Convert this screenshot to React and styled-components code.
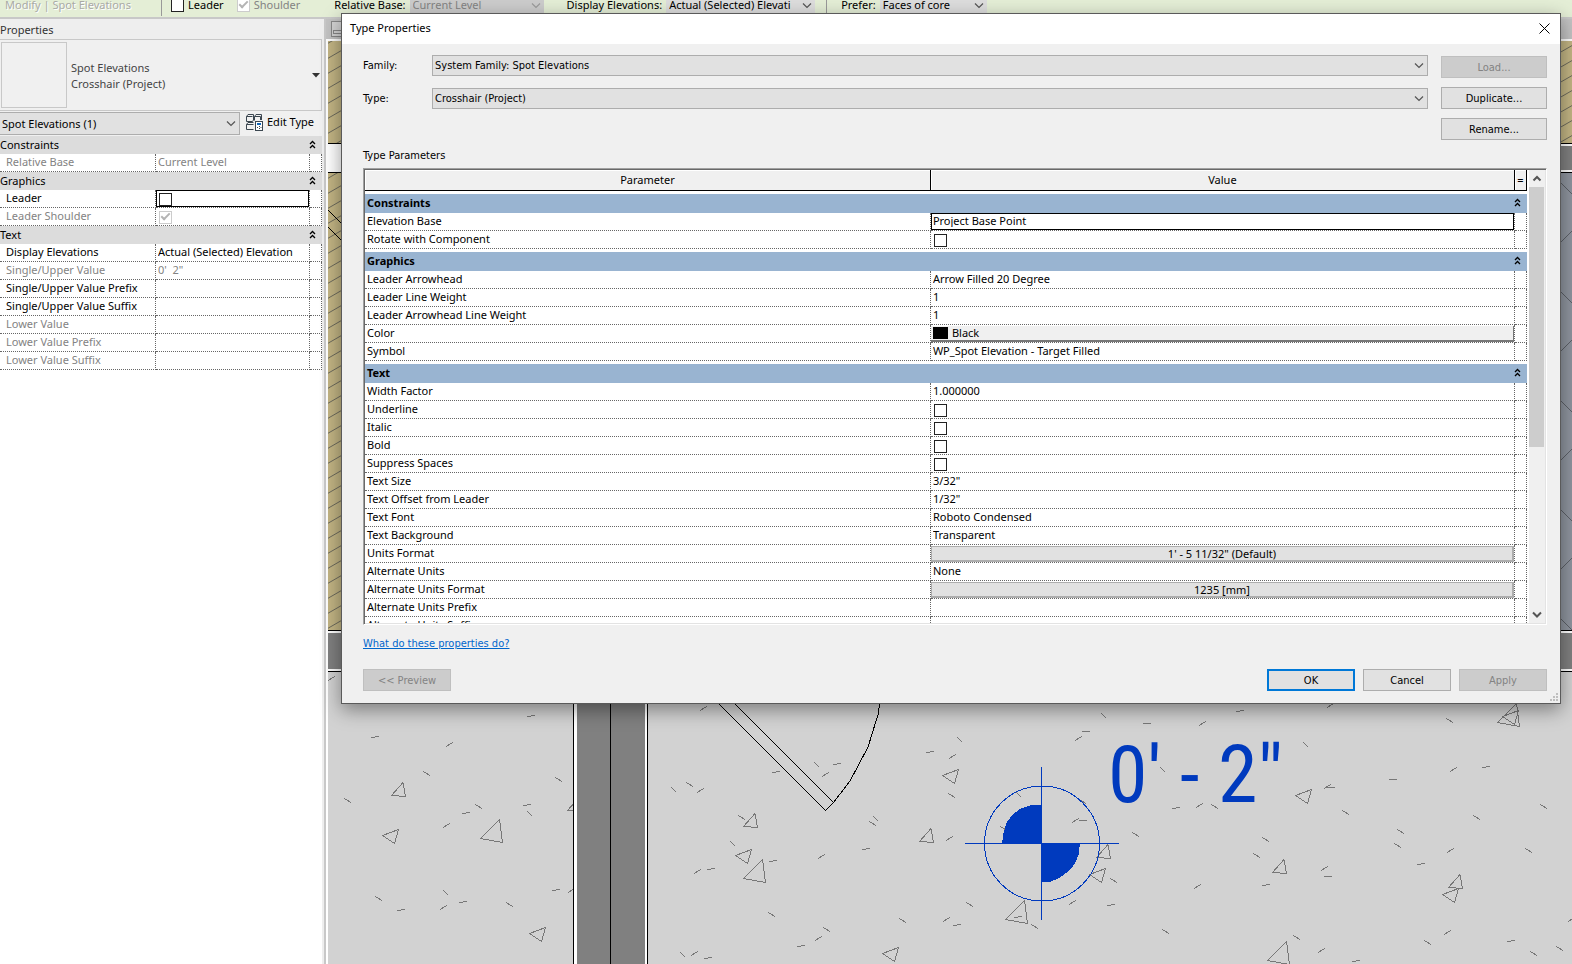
import React from 'react';
import styled, { createGlobalStyle, css } from 'styled-components';

const UI = "'Noto Sans', 'Open Sans', sans-serif";
const DIALOG = "'DejaVu Sans Condensed', 'Noto Sans', sans-serif";

const paletteGroups = [
  {
    name: 'Constraints',
    rows: [{ label: 'Relative Base', value: 'Current Level', disabled: true }],
  },
  {
    name: 'Graphics',
    rows: [
      { label: 'Leader', kind: 'check', active: true },
      { label: 'Leader Shoulder', kind: 'check', checked: true, disabled: true },
    ],
  },
  {
    name: 'Text',
    rows: [
      { label: 'Display Elevations', value: 'Actual (Selected) Elevation' },
      { label: 'Single/Upper Value', value: "0'  2\"", disabled: true },
      { label: 'Single/Upper Value Prefix', value: '' },
      { label: 'Single/Upper Value Suffix', value: '' },
      { label: 'Lower Value', value: '', disabled: true },
      { label: 'Lower Value Prefix', value: '', disabled: true },
      { label: 'Lower Value Suffix', value: '', disabled: true },
    ],
  },
];

const typeGroups = [
  {
    name: 'Constraints',
    rows: [
      { label: 'Elevation Base', kind: 'select', value: 'Project Base Point' },
      { label: 'Rotate with Component', kind: 'check' },
    ],
  },
  {
    name: 'Graphics',
    rows: [
      { label: 'Leader Arrowhead', value: 'Arrow Filled 20 Degree' },
      { label: 'Leader Line Weight', value: '1' },
      { label: 'Leader Arrowhead Line Weight', value: '1' },
      { label: 'Color', kind: 'color', value: 'Black' },
      { label: 'Symbol', value: 'WP_Spot Elevation - Target Filled' },
    ],
  },
  {
    name: 'Text',
    rows: [
      { label: 'Width Factor', value: '1.000000' },
      { label: 'Underline', kind: 'check' },
      { label: 'Italic', kind: 'check' },
      { label: 'Bold', kind: 'check' },
      { label: 'Suppress Spaces', kind: 'check' },
      { label: 'Text Size', value: '3/32"' },
      { label: 'Text Offset from Leader', value: '1/32"' },
      { label: 'Text Font', value: 'Roboto Condensed' },
      { label: 'Text Background', value: 'Transparent' },
      { label: 'Units Format', kind: 'button', value: '1\' - 5 11/32" (Default)' },
      { label: 'Alternate Units', value: 'None' },
      { label: 'Alternate Units Format', kind: 'button', value: '1235 [mm]' },
      { label: 'Alternate Units Prefix', value: '' },
      { label: 'Alternate Units Suffix', value: '' },
    ],
  },
];

// concrete hatch: one outline per mark, repeated at [x, y]
const marks = [
  {
    d: 'M0 1.5H3L5 .5H8',
    at: [
      [527, 715], [371, 736], [462, 812], [523, 804], [397, 909], [459, 901], [552, 889], [707, 868], [704, 957],
      [926, 751], [772, 771], [833, 763], [862, 848], [769, 860], [797, 945], [953, 924], [1107, 904], [1014, 916],
      [1236, 710], [1172, 807], [1482, 766], [1262, 884], [1417, 863], [1507, 940], [1352, 960],
    ],
  },
  {
    d: 'M0 .5H8',
    at: [[1143, 723], [1389, 779], [1324, 876], [1327, 787], [1082, 731], [1079, 820], [1418, 703]],
  },
  {
    d: 'M0 4.5L7 .5',
    at: [
      [446, 742], [443, 823], [440, 905], [697, 788], [694, 869], [691, 951], [700, 706], [568, 888], [949, 754],
      [1075, 736], [822, 772], [946, 836], [818, 854], [943, 917], [1072, 818], [1069, 900], [815, 936], [1199, 721],
      [1196, 803], [1194, 884], [1321, 866], [1450, 767], [1447, 848], [1444, 930], [1318, 948], [1324, 784],
      [1327, 703], [1568, 917], [328, 676],
    ],
  },
  {
    d: 'M0 .5L7 4.5',
    at: [
      [423, 771], [344, 798], [475, 804], [555, 777], [375, 896], [506, 902], [686, 782], [948, 793], [869, 821],
      [768, 912], [899, 918], [966, 902], [823, 927], [738, 815], [1132, 832], [1110, 878], [1031, 924], [1000, 826],
      [1079, 799], [1211, 804], [1262, 837], [1253, 853], [1342, 810], [1397, 829], [1394, 843], [1473, 815],
      [1540, 804], [1525, 848], [1162, 929], [1293, 935], [1424, 940], [1556, 946], [1530, 951], [1446, 718],
    ],
  },
  {
    d: 'M.5 .5L5.5 5.5',
    at: [
      [527, 811], [443, 890], [671, 787], [680, 952], [730, 841], [957, 737], [1101, 713], [814, 762], [873, 816],
      [1016, 792], [1303, 742], [1160, 767],
    ],
  },
  {
    d: 'M.5 13.5L12 .5L14.5 14.5Z',
    at: [[391, 782], [743, 813], [919, 828], [1096, 844], [1272, 859], [1448, 874], [567, 797]],
  },
  {
    d: 'M.5 6.5L16.5 .5L12.5 14.5Z',
    at: [[382, 829], [529, 927], [735, 849], [942, 769], [1089, 868], [882, 947], [1295, 789], [1442, 888], [1502, 710]],
  },
  {
    d: 'M.5 19.5L19.5 .5L22.5 23.5Z',
    at: [[480, 819], [743, 859], [1005, 900], [1267, 941], [1497, 703]],
  },
];

function ChevronsIcon() {
  return (
    <svg width="7" height="10" viewBox="0 0 7 10" fill="none" stroke="#000" strokeWidth="1.3" aria-hidden="true">
      <path d="M1 4L3.5 1.5L6 4M1 8L3.5 5.5L6 8" />
    </svg>
  );
}

function ChevronIcon({ color = '#555', up, bold }) {
  return (
    <svg width="10" height="7" viewBox="0 0 10 7" fill="none" stroke={color} strokeWidth={bold ? 2 : 1.2} aria-hidden="true">
      <path d={up ? 'M1.5 5.5L5 2L8.5 5.5' : 'M1 1.5L5 5.5L9 1.5'} />
    </svg>
  );
}

function EditTypeIcon() {
  return (
    <svg width="17" height="17" viewBox="0 0 17 17" fill="none" stroke="#3b4650" aria-hidden="true">
      <path d="M.5 2.5L2 .5H7.5V6L6.5 7.5H.5ZM8.5 2.5L10 .5H15.5V6M8.5 2.5V6.5M.5 2.5H6.5M8.5 2.5H14.5V6M7.5 15.5H.5V10.5L2 8.5H7.5M.5 10.5H7.5" />
      <rect x="9.5" y="7.5" width="7" height="9" fill="#fff" />
      <path d="M11 9.5H15M11 10.5H15" stroke="#1467b8" />
      <path d="M11 13.5H12M13 12.5H14M13 14.5H14M14.5 13.5H15.5" />
    </svg>
  );
}

function Select({ id, label, value, muted, tone }) {
  return (
    <SelectBox $muted={muted} $tone={tone}>
      <select id={id} aria-label={label} defaultValue={value} disabled={muted}>
        <option>{value}</option>
      </select>
      <ChevronIcon color={muted ? '#9b9b9b' : '#555'} />
    </SelectBox>
  );
}

function ValueCell({ row, id }) {
  switch (row.kind) {
    case 'check':
      return (
        <CheckHolder $active={row.active}>
          <Checkbox id={id} defaultChecked={row.checked} disabled={row.disabled} />
        </CheckHolder>
      );
    case 'select':
      return (
        <CellSelect id={id} defaultValue={row.value}>
          <option>{row.value}</option>
        </CellSelect>
      );
    case 'button':
      return <CellButton id={id} type="button">{row.value}</CellButton>;
    case 'color':
      return (
        <ColorButton id={id} type="button">
          <Swatch />
          {row.value}
        </ColorButton>
      );
    default:
      return <CellInput id={id} type="text" defaultValue={row.value} disabled={row.disabled} />;
  }
}

function ParameterGroups({ groups, prefix, Heading }) {
  return groups.map((group) => (
    <tbody key={group.name}>
      <tr>
        <Heading colSpan={3} scope="rowgroup">
          <GroupBar>
            {group.name}
            <button type="button" aria-label={`Collapse ${group.name}`}><ChevronsIcon /></button>
          </GroupBar>
        </Heading>
      </tr>
      {group.rows.map((row) => {
        const id = `${prefix}-${row.label.replace(/\W+/g, '-').toLowerCase()}`;
        return (
          <tr key={row.label}>
            <Cell $disabled={row.disabled}><label htmlFor={id}>{row.label}</label></Cell>
            <Cell><ValueCell row={row} id={id} /></Cell>
            <Cell />
          </tr>
        );
      })}
    </tbody>
  ));
}

function OptionsStrip() {
  return (
    <OptionsBar>
      <ModeName>Modify | Spot Elevations</ModeName>
      <OptionLabel><Checkbox />Leader</OptionLabel>
      <OptionLabel $disabled><Checkbox defaultChecked disabled />Shoulder</OptionLabel>
      <OptionField $width="134px" $after="23px">
        <label htmlFor="opt-base">Relative Base:</label>
        <Select id="opt-base" value="Current Level" muted tone="#cccccc" />
      </OptionField>
      <OptionField $width="149px" $after="11px">
        <label htmlFor="opt-display">Display Elevations:</label>
        <Select id="opt-display" value="Actual (Selected) Elevati" tone="#dddddd" />
      </OptionField>
      <OptionDivider />
      <OptionField $width="107px" $after="0px">
        <label htmlFor="opt-prefer">Prefer:</label>
        <Select id="opt-prefer" value="Faces of core" tone="#dddddd" />
      </OptionField>
    </OptionsBar>
  );
}

function PropertiesPalette() {
  return (
    <Palette>
      <PaletteTitle>Properties</PaletteTitle>
      <TypeSelector type="button">
        <Thumbnail />
        <TypeName>
          Spot Elevations
          <br />
          Crosshair (Project)
        </TypeName>
        <svg width="8" height="5" viewBox="0 0 8 5" aria-hidden="true"><path d="M0 0H8L4 4.5Z" fill="#333" /></svg>
      </TypeSelector>
      <FilterRow>
        <Select label="Element filter" value="Spot Elevations (1)" tone="#e1e1e1" />
        <EditType type="button"><EditTypeIcon />Edit Type</EditType>
      </FilterRow>
      <PaletteTable>
        <colgroup><col width="156" /><col /><col width="12" /></colgroup>
        <ParameterGroups groups={paletteGroups} prefix="inst" Heading={PaletteHeading} />
      </PaletteTable>
    </Palette>
  );
}

function Drawing() {
  return (
    <Sheet viewBox="328 41 1244 923" preserveAspectRatio="xMinYMin slice" aria-label="Floor plan">
      <defs>
        <pattern id="wood" width="26" height="15" patternUnits="userSpaceOnUse">
          <rect width="26" height="15" fill="#c3b584" />
          <path d="M-26 22.5L26 -7.5M0 22.5L52 -7.5" stroke="#6c6a5c" fill="none" />
        </pattern>
        <pattern id="tile" x="1560" y="182" width="64" height="109" patternUnits="userSpaceOnUse">
          <rect width="64" height="109" fill="#8f959f" />
          <path d="M0 0L32 32M0 61L32 29" stroke="#5c6067" fill="none" />
        </pattern>
      </defs>
      <rect x="328" y="41" width="1244" height="923" fill="#d2d2d2" />
      <g shapeRendering="crispEdges">
        <rect x="328" y="41" width="1244" height="102" fill="url(#wood)" />
        <rect x="328" y="143" width="1244" height="30" fill="#000" />
        <rect x="328" y="144" width="1200" height="28" fill="#fff" />
        <rect x="1528" y="144" width="44" height="28" fill="#fff" />
        <rect x="1528" y="146" width="44" height="24" fill="#808080" />
        <rect x="328" y="173" width="600" height="457" fill="url(#wood)" />
        <rect x="928" y="173" width="644" height="457" fill="url(#tile)" />
        <rect x="328" y="630" width="1244" height="42" fill="#000" />
        <rect x="328" y="631" width="1244" height="40" fill="#fff" />
        <rect x="328" y="633" width="1244" height="36" fill="#808080" />
        <path d="M328 210L343 225M328 227L343 242" stroke="#000" fill="none" />
        <g fill="none" stroke="#777">
          {marks.map((mark) => mark.at.map(([x, y]) => (
            <path key={`${x}-${y}`} d={mark.d} transform={`translate(${x} ${y})`} />
          )))}
        </g>
        <rect x="573" y="672" width="75" height="292" fill="#000" />
        <rect x="574" y="672" width="73" height="292" fill="#fff" />
        <rect x="577" y="672" width="68" height="292" fill="#808080" />
        <rect x="610" y="672" width="1" height="292" fill="#000" />
        <path
          d="M718 703L825.5 810.5L833.5 802.5L734 703M833.5 802.5L850 781L868 747L878.5 713L879.5 703"
          stroke="#000"
          fill="none"
        />
        <g stroke="#003abe" fill="none">
          <circle cx="1042" cy="843.5" r="57.5" />
          <path d="M965 843.5H1119M1041.5 767V920" />
          <path
            d="M1041.5 843.5V805.5H1032L1021 809L1013 815L1007 823L1004 833L1002.5 843.5ZM1041.5 843.5H1079.5L1078 855L1074 864L1068 871L1060 877L1051 881L1041.5 882Z"
            fill="#003abe"
          />
        </g>
      </g>
      <SpotText x="1108" y="802">0&apos; - 2&quot;</SpotText>
    </Sheet>
  );
}

function TypeProperties() {
  return (
    <Dialog role="dialog" aria-labelledby="dialog-title">
      <TitleBar>
        <h1 id="dialog-title">Type Properties</h1>
        <button type="button" aria-label="Close">
          <svg width="11" height="11" viewBox="0 0 11 11" fill="none" stroke="#000" aria-hidden="true">
            <path d="M.5 .5L10.5 10.5M10.5 .5L.5 10.5" />
          </svg>
        </button>
      </TitleBar>
      <DialogBody>
        <TypeForm>
          <Fields>
            <label htmlFor="family">Family:</label>
            <Select id="family" value="System Family: Spot Elevations" tone="#e1e1e1" />
            <label htmlFor="type">Type:</label>
            <Select id="type" value="Crosshair (Project)" tone="#e1e1e1" />
          </Fields>
          <SideButtons>
            <PushButton type="button" disabled>Load...</PushButton>
            <PushButton type="button">Duplicate...</PushButton>
            <PushButton type="button">Rename...</PushButton>
          </SideButtons>
        </TypeForm>
        <Caption id="params-caption">Type Parameters</Caption>
        <Frame>
          <GridView>
            <TypeTable aria-labelledby="params-caption">
              <colgroup><col width="48.7%" /><col /><col width="12" /></colgroup>
              <thead>
                <tr>
                  <ColumnHead scope="col">Parameter</ColumnHead>
                  <ColumnHead scope="col">Value</ColumnHead>
                  <ColumnHead scope="col">=</ColumnHead>
                </tr>
              </thead>
              <ParameterGroups groups={typeGroups} prefix="type" Heading={TypeHeading} />
            </TypeTable>
          </GridView>
          <ScrollBar>
            <button type="button" aria-label="Scroll up"><ChevronIcon up bold /></button>
            <Track><Thumb /></Track>
            <button type="button" aria-label="Scroll down"><ChevronIcon bold /></button>
          </ScrollBar>
        </Frame>
        <HelpLink href="#help">What do these properties do?</HelpLink>
        <Footer>
          <PushButton type="button" disabled>&lt;&lt; Preview</PushButton>
          <Spacer />
          <PushButton type="button" $primary>OK</PushButton>
          <PushButton type="button">Cancel</PushButton>
          <PushButton type="button" disabled>Apply</PushButton>
        </Footer>
      </DialogBody>
      <Grip width="9" height="9" viewBox="0 0 9 9" aria-hidden="true">
        <path d="M6 0h2v2h-2zM3 3h2v2h-2zM6 3h2v2h-2zM0 6h2v2h-2zM3 6h2v2h-2zM6 6h2v2h-2z" fill="#bfbfbf" />
      </Grip>
    </Dialog>
  );
}

export default function App() {
  return (
    <Desktop>
      <GlobalStyle />
      <OptionsStrip />
      <Workspace>
        <PropertiesPalette />
        <Splitter />
        <View>
          <ViewTabs>
            <svg width="20" height="17" viewBox="0 0 20 17" fill="none" stroke="#888" aria-hidden="true">
              <rect x=".5" y=".5" width="22" height="15" fill="#d4d4d4" />
              <rect x="2.5" y="9.5" width="14" height="3" />
            </svg>
          </ViewTabs>
          <Drawing />
        </View>
      </Workspace>
      <TypeProperties />
    </Desktop>
  );
}

const GlobalStyle = createGlobalStyle`
  *, *::before, *::after {
    box-sizing: border-box;
  }

  body {
    margin: 0;
    overflow: hidden;
  }

  button, input, select {
    margin: 0;
    padding: 0;
    border: 0;
    border-radius: 0;
    background: transparent;
    color: inherit;
    font: inherit;
    appearance: none;
    outline: none;
  }
`;

const Desktop = styled.div`
  position: relative;
  display: flex;
  flex-direction: column;
  height: 100vh;
  overflow: hidden;
  background: #c8c8c8;
  color: #000;
  font: 11px/16px ${UI};
`;

const Checkbox = styled.input.attrs({ type: 'checkbox' })`
  display: block;
  flex: none;
  width: 13px;
  height: 13px;
  border: 1px solid #222;
  background: #fff;

  &:disabled {
    border-color: #ccc;
  }

  &:checked::after {
    content: '';
    display: block;
    width: 9px;
    height: 5px;
    margin: 1px;
    border: solid #b4b4b4;
    border-width: 0 0 2px 2px;
    transform: rotate(-45deg);
  }
`;

const SelectBox = styled.div`
  display: grid;
  align-items: center;
  min-width: 0;
  height: 21px;
  border: 1px solid #adadad;
  background: ${(p) => p.$tone};
  color: ${(p) => (p.$muted ? '#838383' : '#000')};

  > * {
    grid-area: 1 / 1;
  }

  select {
    width: 100%;
    height: 19px;
    padding: 0 20px 0 3px;
    opacity: 1;
  }

  svg {
    justify-self: end;
    margin-right: 3px;
    pointer-events: none;
  }
`;

const OptionsBar = styled.div`
  display: flex;
  flex: none;
  align-items: center;
  height: 17px;
  padding: 0 0 7px 5px;
  overflow: hidden;
  background: #e4eed6;
`;

const ModeName = styled.span`
  width: 157px;
  height: 22px;
  margin-right: 9px;
  border-right: 1px solid #999;
  color: #a9aaa6;
  line-height: 22px;
  text-shadow: 1px 1px #fff;
  white-space: nowrap;
`;

const OptionLabel = styled.label`
  display: flex;
  align-items: center;
  gap: 4px;
  margin-right: ${(p) => (p.$disabled ? 34 : 13)}px;
  color: ${(p) => (p.$disabled ? '#838383' : '#000')};
`;

const OptionField = styled.div`
  display: flex;
  align-items: center;
  gap: 4px;
  margin-right: ${(p) => p.$after};
  white-space: nowrap;

  ${SelectBox} {
    width: ${(p) => p.$width};
    border: 0;
  }
`;

const OptionDivider = styled.div`
  width: 1px;
  height: 22px;
  margin-right: 14px;
  background: #999;
`;

const Workspace = styled.div`
  display: flex;
  flex: 1;
  min-height: 0;
  margin-top: 2px;
`;

const Palette = styled.aside`
  flex: none;
  width: 322px;
  background: #fff;
`;

const Splitter = styled.div`
  flex: none;
  width: 4px;
  border-left: 2px solid #eee;
  background: #c8c8c8;
`;

const PaletteTitle = styled.div`
  height: 20px;
  background: #eee;
  color: #333;
  line-height: 21px;
`;

const TypeSelector = styled.button`
  display: flex;
  align-items: center;
  width: 100%;
  height: 72px;
  padding: 2px 1px;
  border: solid #c8c8c8;
  border-width: 1px 1px 1px 0;
  background: #f0f0f0;
  color: #444;
  text-align: left;
`;

const Thumbnail = styled.span`
  width: 66px;
  height: 66px;
  border: 1px solid #c8c8c8;
`;

const TypeName = styled.span`
  flex: 1;
  padding-top: 2px;
  margin-left: 4px;
`;

const FilterRow = styled.div`
  display: grid;
  grid-template-columns: 240px 1fr;
  align-items: center;
  height: 25px;
  background: #f0f0f0;

  ${SelectBox} {
    height: 23px;
    border-left: 0;
  }

  select {
    padding-left: 2px;
  }
`;

const EditType = styled.button`
  display: flex;
  align-items: center;
  gap: 4px;
  margin-left: 6px;
  padding-bottom: 3px;
`;

const tableBase = css`
  width: 100%;
  border-collapse: separate;
  border-spacing: 0;
  table-layout: fixed;
`;

const Cell = styled.td`
  height: 18px;
  padding: 0;
  border: 1px dotted #666;
  border-width: 0 1px 1px 0;
  overflow: hidden;
  color: ${(p) => (p.$disabled ? '#838383' : '#000')};
  line-height: 15px;
  white-space: nowrap;
  vertical-align: top;
`;

const PaletteTable = styled.table`
  ${tableBase}

  label {
    padding-left: 6px;
  }
`;

const TypeTable = styled.table`
  ${tableBase}

  label {
    padding-left: 2px;
  }
`;

const GroupBar = styled.div`
  display: flex;
  align-items: center;
  justify-content: space-between;
  padding-right: 6px;

  button {
    display: flex;
  }
`;

const PaletteHeading = styled.th`
  height: 18px;
  padding: 0;
  background: #dcdcdc;
  font-weight: 400;
  line-height: 18px;
`;

const TypeHeading = styled.th`
  height: 22px;
  padding: 0 0 0 2px;
  border-top: 3px solid #fff;
  background: #99b4d1;
  font-weight: 700;
  line-height: 17px;
  vertical-align: top;
`;

const ColumnHead = styled.th`
  height: 21px;
  padding: 0;
  border: solid #000;
  border-width: 0 1px 1px 0;
  background: #f0f0f0;
  box-shadow: inset 1px 1px #fff;
  font-weight: 400;
`;

const CheckHolder = styled.div`
  height: 17px;
  padding: ${(p) => (p.$active ? '2px 0 0 2px' : '3px 0 0 3px')};
  border: ${(p) => (p.$active ? '1px solid #000' : '0')};
`;

const CellInput = styled.input`
  display: block;
  width: 100%;
  height: 15px;
  padding: 0 2px;
  line-height: 15px;

  &:disabled {
    color: #838383;
  }
`;

const CellSelect = styled.select`
  display: block;
  width: 100%;
  height: 17px;
  padding: 0 1px 2px;
  border: 1px solid #000;
  line-height: 13px;
`;

const CellButton = styled.button`
  display: block;
  width: 100%;
  height: 16px;
  margin-top: 1px;
  border: solid #adadad;
  border-width: 1px 2px 2px 1px;
  background: #e1e1e1;
  line-height: 13px;
`;

const ColorButton = styled.button`
  display: flex;
  align-items: center;
  gap: 4px;
  width: 100%;
  height: 16px;
  margin-top: 1px;
  padding-left: 2px;
  border: solid #777;
  border-width: 0 1px 2px 0;
  background: #f0f0f0;
  line-height: 14px;
`;

const Swatch = styled.span`
  width: 15px;
  height: 12px;
  background: #000;
`;

const View = styled.main`
  display: flex;
  flex: 1;
  flex-direction: column;
  min-width: 0;
`;

const ViewTabs = styled.div`
  display: flex;
  flex: none;
  align-items: center;
  height: 20px;
  padding-left: 5px;
  background: #c3c3c3;
`;

const Sheet = styled.svg`
  display: block;
  flex: 1;
  min-height: 0;
  border: solid #fff;
  border-width: 2px 0 0 2px;
`;

const SpotText = styled.text`
  fill: #003abe;
  font: 400 80px 'Roboto Condensed', Roboto, sans-serif;
`;

const Dialog = styled.section`
  position: absolute;
  top: 13px;
  right: 11px;
  left: 341px;
  border: 1px solid #5a5a5a;
  background: #f0f0f0;
  box-shadow: 0 6px 18px rgba(0, 0, 0, 0.4);
  font: 11px/14px ${DIALOG};
`;

const TitleBar = styled.header`
  display: flex;
  align-items: center;
  justify-content: space-between;
  height: 30px;
  padding: 0 10px 2px 8px;
  background: #fff;
  font-family: ${UI};

  h1 {
    margin: 0;
    font-size: 11px;
    font-weight: 400;
  }

  button {
    display: flex;
  }
`;

const DialogBody = styled.div`
  display: flex;
  flex-direction: column;
  padding: 11px 13px 12px 21px;
`;

const TypeForm = styled.div`
  display: grid;
  grid-template-columns: 1fr 106px;
  gap: 13px;
  align-items: start;
`;

const Fields = styled.div`
  display: grid;
  grid-template-columns: 69px 1fr;
  row-gap: 12px;
  align-items: center;

  select {
    padding: 1px 20px 0 2px;
  }
`;

const SideButtons = styled.div`
  display: flex;
  flex-direction: column;
  gap: 9px;
  padding-top: 1px;
`;

const PushButton = styled.button`
  height: 22px;
  padding-top: 1px;
  border: ${(p) => (p.$primary ? '2px solid #0078d7' : '1px solid #adadad')};
  background: #e1e1e1;

  &:disabled {
    border-color: #bfbfbf;
    background: #ccc;
    color: #838383;
  }
`;

const Caption = styled.div`
  margin: 9px 0 5px;
`;

const Frame = styled.div`
  display: flex;
  height: 457px;
  border: 1px solid;
  border-color: #a0a0a0 #fff #fff #a0a0a0;
  background: #fff;
  box-shadow: inset 1px 1px #696969, inset -1px -1px #e3e3e3;
  padding: 1px;
  font-family: ${UI};
`;

const GridView = styled.div`
  flex: 1;
  min-width: 0;
  padding-right: 2px;
  overflow: hidden;
`;

const ScrollBar = styled.div`
  display: grid;
  grid-template-rows: 17px 1fr 17px;
  width: 16px;
  background: #f0f0f0;

  button {
    display: grid;
    place-items: center;
  }
`;

const Track = styled.div`
  padding-right: 1px;
`;

const Thumb = styled.div`
  height: 62%;
  background: #cdcdcd;
`;

const HelpLink = styled.a`
  align-self: flex-start;
  margin-top: 12px;
  color: #0066cc;
`;

const Footer = styled.footer`
  display: flex;
  gap: 8px;
  margin-top: 18px;

  ${PushButton} {
    width: 88px;
  }
`;

const Spacer = styled.div`
  flex: 1;
`;

const Grip = styled.svg`
  position: absolute;
  right: 1px;
  bottom: 1px;
`;
